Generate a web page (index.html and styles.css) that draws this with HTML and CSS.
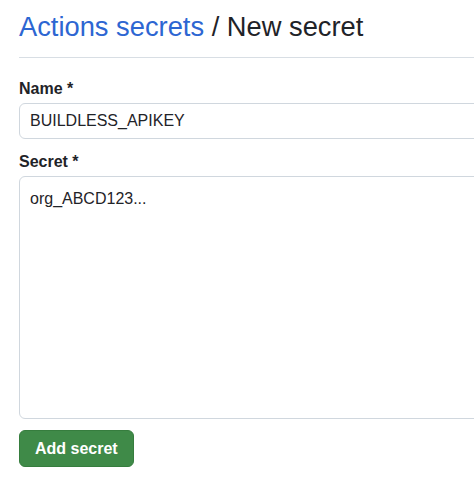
FILE: index.html
```html
<!DOCTYPE html>
<html lang="en">
<head>
<meta charset="utf-8">
<title>Actions secrets / New secret</title>
<link rel="stylesheet" href="styles.css">
</head>
<body>
<main class="page">
  <header class="subhead">
    <h1 class="subhead-title"><a class="crumb" href="#">Actions secrets</a> / New secret</h1>
  </header>
  <form class="secret-form">
    <div class="field">
      <label class="field-label" for="name">Name *</label>
      <input class="text-input" id="name" type="text" value="BUILDLESS_APIKEY">
    </div>
    <div class="field">
      <label class="field-label" for="secret">Secret *</label>
      <textarea class="text-area" id="secret">org_ABCD123...</textarea>
    </div>
    <button class="btn-primary" type="button">Add secret</button>
  </form>
</main>
</body>
</html>
```

FILE: styles.css
```css
html, body {
  margin: 0;
  padding: 0;
  background: #ffffff;
  overflow: hidden;
}

body {
  font-family: "Liberation Sans", Arial, sans-serif;
  color: #1f2328;
}

.page {
  width: 620px;
  padding-left: 19px;
}

.subhead {
  padding: 7px 0 10px;
  border-bottom: 1px solid #d8dee4;
}

.subhead-title {
  margin: 0;
  font-size: 27.3px;
  line-height: 40px;
  font-weight: 400;
  color: #1f2328;
}

.crumb {
  color: #2d66d2;
  text-decoration: none;
}

.secret-form {
  display: flex;
  flex-direction: column;
  align-items: flex-start;
  padding-top: 21px;
}

.field {
  display: flex;
  flex-direction: column;
  width: 100%;
  margin-bottom: 13px;
}

.field-label {
  font-size: 16px;
  line-height: 20px;
  font-weight: 700;
  margin-bottom: 4px;
}

.text-input,
.text-area {
  box-sizing: border-box;
  width: 100%;
  margin: 0;
  border: 1px solid #d0d7de;
  border-radius: 6px;
  background: #ffffff;
  color: #1f2328;
  font-family: "Liberation Sans", Arial, sans-serif;
  font-size: 16px;
  line-height: 20px;
  padding: 7px 10px;
  outline: none;
}

.text-input {
  height: 36px;
}

.text-area {
  height: 243px;
  padding-top: 12px;
  resize: none;
  display: block;
}

.btn-primary {
  margin-top: -2px;
  height: 37px;
  padding: 0 15px;
  border: 1px solid #367d3e;
  border-radius: 6px;
  background: #3f8a48;
  color: #ffffff;
  font-family: "Liberation Sans", Arial, sans-serif;
  font-size: 16px;
  font-weight: 700;
  line-height: 20px;
  cursor: pointer;
}
```
